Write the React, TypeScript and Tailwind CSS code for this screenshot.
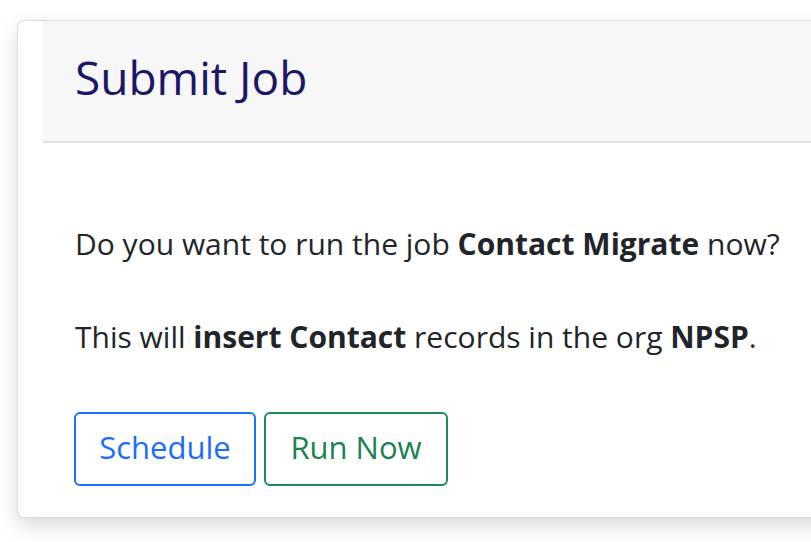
export default function App() {
  return (
    <div className="min-h-screen bg-white pt-5 pl-[17px] overflow-hidden" style={{ fontFamily: "'Open Sans', 'Noto Sans', sans-serif" }}>
      <div className="w-[820px] rounded-l-[7px] border border-[#dcdcdc] border-r-0 bg-white shadow-[0_8px_20px_rgba(0,0,0,0.15)]">
        {/* Header */}
        <div className="ml-[25px] h-[122px] flex items-center border-b-2 border-[#e2e2e2] bg-[#f7f7f7] pl-[32px] pb-[9px]">
          <h3 className="text-[46px] leading-none text-[#1b1766]">Submit Job</h3>
        </div>
        {/* Body */}
        <div className="pl-[57px] pt-[78px] pb-[31px] text-[30px] leading-[45px] text-[#212529]">
          <p>
            Do you want to run the job <b className="font-bold">Contact Migrate</b> now?
          </p>
          <p className="mt-[48px]">
            This will <b className="font-bold">insert Contact</b> records in the org <b className="font-bold">NPSP</b>.
          </p>
          <div className="mt-[53px] -ml-px flex gap-[8px]">
            <button className="h-[74px] w-[182px] pb-[4px] rounded-[6px] border-2 border-[#1a73fb] text-[#1a6dfd] text-[31px]">
              Schedule
            </button>
            <button className="h-[74px] w-[184px] pb-[4px] rounded-[6px] border-2 border-[#1f8a56] text-[#1b8250] text-[31px]">
              Run Now
            </button>
          </div>
        </div>
      </div>
    </div>
  );
}
